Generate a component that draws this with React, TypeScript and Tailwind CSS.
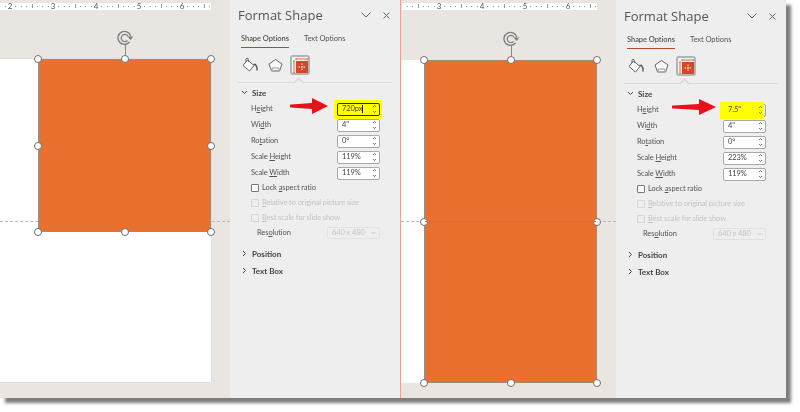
const FONT = "font-['Lato','Noto_Sans',sans-serif]";

const Handle = ({ x, y }: { x: number; y: number }) => (
  <div
    className="absolute h-[8px] w-[8px] rounded-full border border-[#6f6f6f] bg-white"
    style={{ left: x - 4, top: y - 4 }}
  />
);

const Ruler = ({ left, width, digits, first }: { left: number; width: number; digits: number[]; first: number }) => {
  const ticks: { x: number; big: boolean }[] = [];
  for (let i = -8; i < 48; i++) {
    const x = first + (i * 43) / 8;
    if (x < left + 2 || x > left + width - 2 || i % 8 === 0) continue;
    ticks.push({ x, big: i % 4 === 0 });
  }
  return (
    <>
      <div className="absolute top-[3px] h-[7px] bg-white" style={{ left, width }} />
      {ticks.map((t) => (
        <div
          key={t.x}
          className={t.big ? "absolute top-[4px] h-[4px] w-px bg-[#9a9a9a]" : "absolute top-[6px] h-px w-px bg-[#9a9a9a]"}
          style={{ left: t.x }}
        />
      ))}
      {digits.map((d, i) => (
        <span
          key={d}
          className="absolute top-0 w-[10px] text-center text-[8px] leading-[12px] text-[#555]"
          style={{ left: first + i * 43 - 5 }}
        >
          {d}
        </span>
      ))}
    </>
  );
};

const RotateIcon = ({ x, y }: { x: number; y: number }) => (
  <svg className="absolute" style={{ left: x - 8, top: y - 8 }} width="17" height="16" viewBox="0 0 17 16" fill="none">
    <path d="M12.5 12a6.5 6.5 0 1 1 1.2-6" stroke="#808080" strokeWidth="1.4" />
    <path d="M10.5 10.5a3.6 3.6 0 1 1 .6-4" stroke="#808080" strokeWidth="1.3" />
    <path d="M10.5 6.5h6l-3 3.5z" fill="#808080" />
  </svg>
);

const Shape = ({ left, top, width, height }: { left: number; top: number; width: number; height: number }) => {
  const cx = left + width / 2;
  const cy = top + height / 2;
  const r = left + width;
  const b = top + height;
  return (
    <>
      <div className="absolute border border-[#a08a7c] bg-[#ea7030]" style={{ left, top, width, height }} />
      <div className="absolute w-px bg-[#8a8a8a]" style={{ left: cx, top: top - 15, height: 15 }} />
      <RotateIcon x={cx} y={top - 21} />
      {[
        [left, top],
        [cx, top],
        [r, top],
        [left, cy],
        [r, cy],
        [left, b],
        [cx, b],
        [r, b],
      ].map(([x, y]) => (
        <Handle key={`${x}-${y}`} x={x} y={y} />
      ))}
    </>
  );
};

const U = ({ children }: { children: string }) => <span className="underline underline-offset-1">{children}</span>;

const Spinner = ({ value, yellow, active }: { value: string; yellow?: boolean; active?: boolean }) => (
  <div
    className={`relative flex h-[13px] w-[43px] items-center justify-between rounded-[2px] pl-[4px] pr-[2px] ${
      active ? "border-[1.5px] border-[#2b2b2b]" : "border border-[#a8a8a8] bg-white"
    }`}
  >
    {active && <div className="absolute -left-[4px] -right-[3px] -top-[4px] -bottom-[4px] -z-10 bg-[#ffff00]" />}
    {yellow && !active && <div className="absolute -left-[4px] right-[1px] -top-[3px] -bottom-[3px] bg-[#ffff00]" />}
    <span className="relative flex items-center text-[7.5px] leading-none text-[#444]">
      {value}
      {active && <span className="h-[8px] w-px bg-[#222]" />}
    </span>
    <svg className="relative" width="5" height="10" viewBox="0 0 5 10" fill="none" stroke="#555" strokeWidth="0.8">
      <path d="M1 3l1.5-1.5L4 3M1 7l1.5 1.5L4 7" />
    </svg>
  </div>
);

const Row = ({ label, children }: { label: React.ReactNode; children: React.ReactNode }) => (
  <div className="flex h-[16px] items-center justify-between pl-[21px] pr-[20px] text-[7.5px] tracking-[-0.1px] text-[#555]">
    <span>{label}</span>
    {children}
  </div>
);

const Check = ({ children, disabled }: { children: React.ReactNode; disabled?: boolean }) => (
  <div
    className={`flex h-[15px] items-center gap-[3px] pl-[21px] text-[7.5px] tracking-[-0.1px] ${
      disabled ? "text-[#c4c4c4]" : "text-[#555]"
    }`}
  >
    <div
      className={`h-[8px] w-[8px] rounded-[1px] border ${disabled ? "border-[#d6d6d6]" : "border-[#777] bg-white"}`}
    />
    <span>{children}</span>
  </div>
);

const Chevron = ({ open }: { open?: boolean }) => (
  <svg width="7" height="7" viewBox="0 0 7 7" fill="none" stroke="#444" strokeWidth="1">
    <path d={open ? "M1 2l2.5 2.5L6 2" : "M2 1l2.5 2.5L2 6"} />
  </svg>
);

const Section = ({ title, open }: { title: string; open?: boolean }) => (
  <div className="flex h-[17px] items-center gap-[4px] pl-[11px] text-[8px] font-bold text-[#444]">
    <Chevron open={open} />
    {title}
  </div>
);

const Panel = ({
  height,
  scaleHeight,
  active,
  offset,
}: {
  height: string;
  scaleHeight: string;
  active?: boolean;
  offset?: boolean;
}) => (
  <div className={`relative isolate w-[170px] shrink-0 bg-[#eeeeee] ${offset ? "pt-[1px]" : ""}`}>
    <div className="flex h-[30px] items-center justify-between pl-[8px] pr-[10px]">
      <span className="font-['Open_Sans'] text-[13px] leading-none text-[#555]">Format Shape</span>
      <div className="flex items-center gap-[12px]">
        <svg width="10" height="6" viewBox="0 0 10 6" fill="none" stroke="#666" strokeWidth="1">
          <path d="M0.5 0.5l4.5 4.5 4.5-4.5" />
        </svg>
        <svg width="7" height="7" viewBox="0 0 7 7" fill="none" stroke="#666" strokeWidth="1">
          <path d="M0.5 0.5l6 6M6.5 0.5l-6 6" />
        </svg>
      </div>
    </div>
    <div className="flex h-[18px] items-center gap-[15px] pl-[11px] text-[7.5px] tracking-[-0.05px] text-[#555]">
      <span className="flex h-[18px] items-center border-b border-[#b5482c] font-semibold">Shape Options</span>
      <span>Text Options</span>
    </div>
    <div className="flex h-[34px] items-center gap-[10px] pl-[12px]">
      <svg width="16" height="16" viewBox="0 0 16 16" fill="none" stroke="#666" strokeWidth="1">
        <path d="M5.5 3l6.5 5.5-4.5 5.5-6.5-5.5z" fill="#fff" />
        <path d="M4 5V2.5a1.2 1.2 0 0 1 2.4 0V5" />
        <path d="M11.5 7.5h2l1.5 3v3" stroke="#555" strokeWidth="1.4" />
      </svg>
      <svg width="15" height="15" viewBox="0 0 15 15" fill="none" stroke="#666" strokeWidth="1">
        <path d="M7.5 1.5L14 6l-2.5 7h-8L1 6z" fill="#f8f8f8" />
        <path d="M3.5 13l1-3h6l1 3" stroke="#999" />
      </svg>
      <div className="-ml-[3px] flex h-[20px] w-[20px] items-center justify-center rounded-[3px] border-2 border-[#b3b3b3] bg-[#f5f5f5]">
        <svg width="15" height="15" viewBox="0 0 15 15" fill="none">
          <rect x="3" y="3" width="12" height="12" fill="#d24726" />
          <path d="M3 1h12M3 0v2M15 0v2" stroke="#d24726" strokeWidth="0.8" />
          <path d="M1 3v12M0 3h2M0 15h2" stroke="#d24726" strokeWidth="0.8" />
          <path d="M9 5.5v7M5.5 9h7" stroke="#fff" strokeWidth="1" strokeDasharray="1.5 1" />
        </svg>
      </div>
    </div>
    <div className="relative mb-[1px] ml-[8px] mr-[8px] border-t border-[#dcdcdc]">
      <div className="absolute left-[57px] -top-[4px] h-[7px] w-[7px] rotate-45 border-l border-t border-[#cfcfcf] bg-[#eeeeee]" />
    </div>
    <Section title="Size" open />
    <Row label={<>H<U>e</U>ight</>}>
      <Spinner value={height} yellow active={active} />
    </Row>
    <Row label={<>Wi<U>d</U>th</>}>
      <Spinner value='4"' />
    </Row>
    <Row label={<>Ro<U>t</U>ation</>}>
      <Spinner value="0°" />
    </Row>
    <Row label={<>Scale <U>H</U>eight</>}>
      <Spinner value={scaleHeight} />
    </Row>
    <Row label={<>Scale <U>W</U>idth</>}>
      <Spinner value="119%" />
    </Row>
    <div className="-mt-px">
      <Check>Lock <U>a</U>spect ratio</Check>
      <Check disabled><U>R</U>elative to original picture size</Check>
      <Check disabled><U>B</U>est scale for slide show</Check>
    </div>
    <div className="flex h-[16px] items-center justify-between pl-[27px] pr-[20px] text-[7.5px] tracking-[-0.1px] text-[#555]">
      <span>Res<U>o</U>lution</span>
      <div className="flex h-[12px] w-[53px] items-center justify-between rounded-[2px] border border-[#e2e2e2] pl-[4px] pr-[3px] text-[7.5px] text-[#c4c4c4]">
        640 x 480
        <svg width="5" height="4" viewBox="0 0 5 4" fill="none" stroke="#bbb" strokeWidth="0.8">
          <path d="M0.5 1l2 2 2-2" />
        </svg>
      </div>
    </div>
    <div className="h-[4px]" />
    <Section title="Position" />
    <Section title="Text Box" />
  </div>
);

export default function App() {
  return (
    <div className={`relative h-[412px] w-[800px] overflow-hidden bg-white blur-[0.35px] ${FONT}`}>
      <div className="flex h-[398px] w-[786px] bg-[#e9e6e2] shadow-[5px_5px_3px_#7d7d7d]">
        {/* left canvas */}
        <div className="relative w-[230px] shrink-0 overflow-hidden bg-[#e9e6e2]">
          <Ruler left={0} width={211} digits={[2, 3, 4, 5, 6]} first={10} />
          <div className="absolute left-0 top-[59px] h-[323px] w-[211px] bg-white shadow-[0_0_1px_#bbb]" />
          <div className="absolute left-0 top-[221px] w-[230px] border-t border-dashed border-[#bbb]" />
          <Shape left={38} top={59} width={173} height={173} />
        </div>
        <Panel height="720px" scaleHeight="119%" active />
        <div className="w-px shrink-0 bg-[#e8a593]" />
        {/* right canvas */}
        <div className="relative w-[215px] shrink-0 overflow-hidden bg-[#e9e6e2]">
          <Ruler left={1} width={195} digits={[3, 4, 5, 6]} first={38} />
          <div className="absolute left-0 top-[60px] h-[323px] w-[196px] bg-white" />
          <div className="absolute left-0 top-[221px] w-[215px] border-t border-dashed border-[#bbb]" />
          <Shape left={23} top={60} width={173} height={323} />
          <div className="absolute left-[24px] top-[221px] h-px w-[171px] bg-[#dc6c32]" />
        </div>
        <Panel height='7.5"' scaleHeight="223%" offset />
      </div>
      {/* callout arrows */}
      <svg className="absolute left-[290px] top-[98px]" width="39" height="16" viewBox="0 0 39 16">
        <path d="M1 6.5L22 5V0l16 8-16 8v-5L1 9.5a1.5 1.5 0 0 1 0-3z" fill="#e8101a" />
      </svg>
      <svg className="absolute left-[672px] top-[99px]" width="45" height="16" viewBox="0 0 45 16">
        <path d="M1 6.5L27 5V0l17 8-17 8v-5L1 9.5a1.5 1.5 0 0 1 0-3z" fill="#e8101a" />
      </svg>
    </div>
  );
}
